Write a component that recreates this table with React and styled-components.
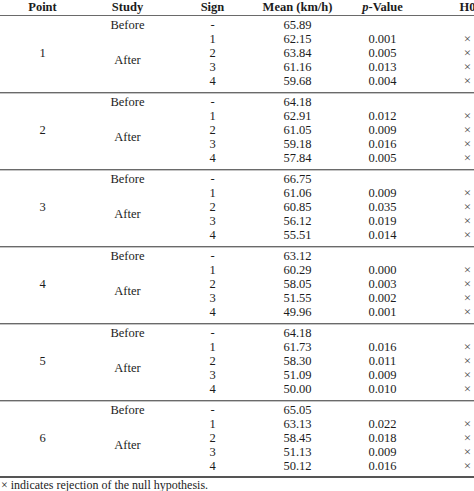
import React from "react";
import styled, { createGlobalStyle } from "styled-components";

const Global = createGlobalStyle`
  html, body { margin: 0; padding: 0; background: #fff; overflow: hidden; }
  body { font-family: "Liberation Serif", "DejaVu Serif", serif; color: #1c1c1c; }
`;

const Viewport = styled.div`
  width: 474px;
  overflow: hidden;
`;

const Table = styled.div`
  width: 510px;
  font-size: 12.5px;
`;

const HeaderRow = styled.div`
  display: grid;
  grid-template-columns: repeat(6, 85px);
  height: 15px;
  line-height: 14px;
  font-weight: bold;
`;

const Head = styled.div`
  text-align: center;
  white-space: nowrap;
`;

const Group = styled.div`
  display: grid;
  grid-template-columns: repeat(6, 85px);
  grid-template-rows: repeat(5, 14px);
  padding: 2px 0 ${(p) => (p.$last ? "3px" : "4px")};
  border-top: 1px solid #6a6a6a;
  border-bottom: ${(p) => (p.$last ? "2px solid #555" : "0")};
  box-shadow: ${(p) => (p.$first ? "none" : "inset 0 1px 0 #c4c4c4")};
  line-height: 14px;
`;

const Cell = styled.div`
  text-align: center;
  white-space: nowrap;
  grid-column: ${(p) => p.$col};
  grid-row: ${(p) => p.$row};
  align-self: ${(p) => (p.$span ? "center" : "stretch")};
`;

const Mark = styled(Cell)`
  color: #4a4a4a;
  font-size: 13px;
`;

const Footnote = styled.div`
  font-size: 12px;
  line-height: 12px;
  padding: 1px 0 0 1px;
  white-space: nowrap;
`;

const data = [
  { mean: ["65.89", "62.15", "63.84", "61.16", "59.68"], p: ["0.001", "0.005", "0.013", "0.004"] },
  { mean: ["64.18", "62.91", "61.05", "59.18", "57.84"], p: ["0.012", "0.009", "0.016", "0.005"] },
  { mean: ["66.75", "61.06", "60.85", "56.12", "55.51"], p: ["0.009", "0.035", "0.019", "0.014"] },
  { mean: ["63.12", "60.29", "58.05", "51.55", "49.96"], p: ["0.000", "0.003", "0.002", "0.001"] },
  { mean: ["64.18", "61.73", "58.30", "51.09", "50.00"], p: ["0.016", "0.011", "0.009", "0.010"] },
  { mean: ["65.05", "63.13", "58.45", "51.13", "50.12"], p: ["0.022", "0.018", "0.009", "0.016"] },
];

const signs = ["-", "1", "2", "3", "4"];

export default function App() {
  return (
    <Viewport>
      <Global />
      <Table>
        <HeaderRow>
          <Head>Point</Head>
          <Head>Study</Head>
          <Head>Sign</Head>
          <Head>Mean (km/h)</Head>
          <Head>
            <i>p</i>-Value
          </Head>
          <Head>H0</Head>
        </HeaderRow>
        {data.map((g, gi) => (
          <Group key={gi} $first={gi === 0} $last={gi === data.length - 1}>
            <Cell $col={1} $row="1 / 6" $span>
              {gi + 1}
            </Cell>
            <Cell $col={2} $row={1}>
              Before
            </Cell>
            <Cell $col={2} $row="2 / 6" $span>
              After
            </Cell>
            {signs.map((s, i) => (
              <Cell key={"s" + i} $col={3} $row={i + 1}>
                {s}
              </Cell>
            ))}
            {g.mean.map((m, i) => (
              <Cell key={"m" + i} $col={4} $row={i + 1}>
                {m}
              </Cell>
            ))}
            {g.p.map((v, i) => (
              <Cell key={"p" + i} $col={5} $row={i + 2}>
                {v}
              </Cell>
            ))}
            {g.p.map((v, i) => (
              <Mark key={"h" + i} $col={6} $row={i + 2}>
                ×
              </Mark>
            ))}
          </Group>
        ))}
      </Table>
      <Footnote>× indicates rejection of the null hypothesis.</Footnote>
    </Viewport>
  );
}
